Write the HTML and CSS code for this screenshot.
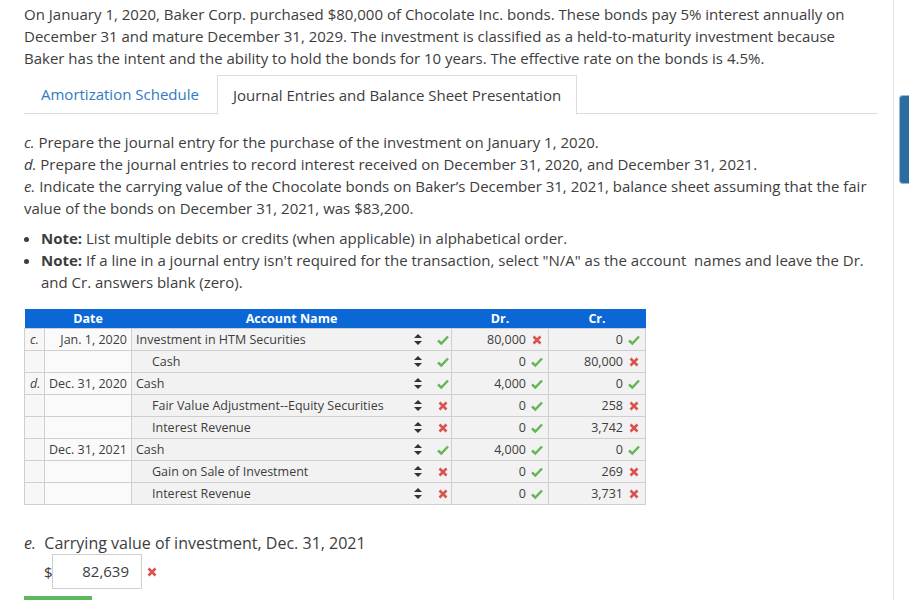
FILE: index.html
```html
<!DOCTYPE html>
<html>
<head>
<meta charset="utf-8">
<link rel="stylesheet" href="styles.css">
</head>
<body>
<div class="page">
  <div class="content">
    <p class="intro">On January 1, 2020, Baker Corp. purchased $80,000 of Chocolate Inc. bonds. These bonds pay 5% interest annually on December 31 and mature December 31, 2029. The investment is classified as a held-to-maturity investment because Baker has the intent and the ability to hold the bonds for 10 years. The effective rate on the bonds is 4.5%.</p>
    <div class="tabs">
      <div class="tab link">Amortization Schedule</div>
      <div class="tab active">Journal Entries and Balance Sheet Presentation</div>
    </div>
    <div class="instructions">
      <p><i>c.</i> Prepare the journal entry for the purchase of the investment on January 1, 2020.<br>
      <i>d.</i> Prepare the journal entries to record interest received on December 31, 2020, and December 31, 2021.<br>
      <i>e.</i> Indicate the carrying value of the Chocolate bonds on Baker’s December 31, 2021, balance sheet assuming that the fair value of the bonds on December 31, 2021, was $83,200.</p>
      <ul class="notes">
        <li><b>Note:</b> List multiple debits or credits (when applicable) in alphabetical order.</li>
        <li><b>Note:</b> If a line in a journal entry isn't required for the transaction, select "N/A" as the account&nbsp; names and leave the Dr. and Cr. answers blank (zero).</li>
      </ul>
    </div>
    <table class="journal">
      <thead>
        <tr><th class="c-let"></th><th class="c-date">Date</th><th class="c-acct">Account Name</th><th class="c-num">Dr.</th><th class="c-num">Cr.</th></tr>
      </thead>
      <tbody>
        <tr><td class="let">c.</td><td class="date">Jan. 1, 2020</td><td class="acct"><div class="acct-in"><span class="name">Investment in HTM Securities</span><span class="sort"></span><span class="ok"></span></div></td><td class="num"><span>80,000</span><span class="bad"></span></td><td class="num"><span>0</span><span class="ok"></span></td></tr>
        <tr><td class="let"></td><td class="date"></td><td class="acct"><div class="acct-in"><span class="name cr">Cash</span><span class="sort"></span><span class="ok"></span></div></td><td class="num"><span>0</span><span class="ok"></span></td><td class="num"><span>80,000</span><span class="bad"></span></td></tr>
        <tr><td class="let">d.</td><td class="date">Dec. 31, 2020</td><td class="acct"><div class="acct-in"><span class="name">Cash</span><span class="sort"></span><span class="ok"></span></div></td><td class="num"><span>4,000</span><span class="ok"></span></td><td class="num"><span>0</span><span class="ok"></span></td></tr>
        <tr><td class="let"></td><td class="date"></td><td class="acct"><div class="acct-in"><span class="name cr">Fair Value Adjustment--Equity Securities</span><span class="sort"></span><span class="bad"></span></div></td><td class="num"><span>0</span><span class="ok"></span></td><td class="num"><span>258</span><span class="bad"></span></td></tr>
        <tr><td class="let"></td><td class="date"></td><td class="acct"><div class="acct-in"><span class="name cr">Interest Revenue</span><span class="sort"></span><span class="bad"></span></div></td><td class="num"><span>0</span><span class="ok"></span></td><td class="num"><span>3,742</span><span class="bad"></span></td></tr>
        <tr><td class="let"></td><td class="date">Dec. 31, 2021</td><td class="acct"><div class="acct-in"><span class="name">Cash</span><span class="sort"></span><span class="ok"></span></div></td><td class="num"><span>4,000</span><span class="ok"></span></td><td class="num"><span>0</span><span class="ok"></span></td></tr>
        <tr><td class="let"></td><td class="date"></td><td class="acct"><div class="acct-in"><span class="name cr">Gain on Sale of Investment</span><span class="sort"></span><span class="bad"></span></div></td><td class="num"><span>0</span><span class="ok"></span></td><td class="num"><span>269</span><span class="bad"></span></td></tr>
        <tr><td class="let"></td><td class="date"></td><td class="acct"><div class="acct-in"><span class="name cr">Interest Revenue</span><span class="sort"></span><span class="bad"></span></div></td><td class="num"><span>0</span><span class="ok"></span></td><td class="num"><span>3,731</span><span class="bad"></span></td></tr>
      </tbody>
    </table>
    <div class="carrying">
      <div class="carry-label"><i>e.</i>&nbsp; Carrying value of investment, Dec. 31, 2021</div>
      <div class="carry-row"><span class="dollar">$</span><span class="box">82,639</span><span class="bad big"></span></div>
      <div class="green-bar"></div>
    </div>
  </div>
  <div class="side"><div class="side-tab"></div></div>
</div>
</body>
</html>
```
FILE: styles.css
```css
html, body { margin: 0; padding: 0; background: #fff; }
body { font-family: "Open Sans", "DejaVu Sans", sans-serif; color: #3d3d3d; font-size: 15px; overflow: hidden; height: 600px; }
.page { display: flex; width: 909px; height: 600px; }
.content { width: 854px; padding: 0 15px 0 24px; border-right: 1px solid #e3e3e3; flex: none; }
.side { flex: 1; padding-top: 95px; display: flex; justify-content: flex-end; }
.side-tab { width: 9px; height: 87px; background: #2b6ca3; border-radius: 4px 0 0 4px; border: 1px solid #9bb7d3; border-right: none; }
p { margin: 0; }
.intro { line-height: 22px; padding-top: 3px; }
.tabs { display: flex; margin-top: 6px; border-bottom: 1px solid #dcdcdc; height: 38px; }
.tab { padding: 0 15px 0 16px; line-height: 38px; height: 38px; }
.tab.link { color: #2f7bbf; padding-left: 17px; padding-right: 18px; }
.tab.active { border: 1px solid #dcdcdc; border-bottom: 1px solid #fff; background: #fff; padding-left: 15px; padding-right: 15px; height: 38px; margin-bottom: -1px; }
.instructions { padding-top: 17px; line-height: 22px; }
.notes { margin: 8px 0 0 0; padding-left: 17px; }
.notes li { margin: 0; }
.journal { border-collapse: collapse; margin-top: 16px; font-size: 12.5px; table-layout: fixed; width: 622px; }
.journal th { background: #0b67d5; color: #fff; font-weight: 700; height: 19px; padding: 0; line-height: 19px; }
.journal th.c-let { width: 20px; }
.journal th.c-date { width: 87px; }
.journal th.c-acct { width: 320px; }
.journal th.c-num { width: 97px; }
.journal td { border: 1px solid #cfcfcf; height: 21px; padding: 0; line-height: 20px; background: #f2f2f2; white-space: nowrap; }
.journal td.let { background: #f7f7f7; font-style: italic; padding-left: 5px; }
.journal td.date { background: #fafafa; text-align: right; padding-right: 4px; }
.acct-in { display: flex; align-items: center; padding-left: 4px; }
.name { flex: 1; min-width: 0; overflow: hidden; }
.name.cr { padding-left: 16px; }
.sort { width: 8px; height: 11px; margin-right: 15px; position: relative; flex: none; }
.sort::before, .sort::after { content: ""; position: absolute; left: 0; border-left: 4px solid transparent; border-right: 4px solid transparent; }
.sort::before { top: 0; border-bottom: 4px solid #333; }
.sort::after { bottom: 0; border-top: 4px solid #333; }
.journal td.num { text-align: right; padding-right: 4px; }
.num span { vertical-align: middle; }
.ok, .bad { display: inline-block; width: 12px; height: 12px; margin-left: 5px; margin-right: 1px; vertical-align: middle; background-repeat: no-repeat; background-position: center; flex: none; }
.ok { background-image: url("data:image/svg+xml;utf8,<svg xmlns='http://www.w3.org/2000/svg' width='12' height='12' viewBox='0 0 12 12'><path d='M1 6.5 L4.3 9.5 L11 2.5' fill='none' stroke='%2364b554' stroke-width='2.4'/></svg>"); }
.bad { background-image: url("data:image/svg+xml;utf8,<svg xmlns='http://www.w3.org/2000/svg' width='12' height='12' viewBox='0 0 12 12'><path d='M2.5 2.5 L9.5 9.5 M9.5 2.5 L2.5 9.5' fill='none' stroke='%23d9534f' stroke-width='2.6'/></svg>"); }
.acct .ok, .acct .bad { margin-left: 0; margin-right: 2px; }
.carrying { padding-top: 27px; }
.carry-label { font-size: 16px; line-height: 22px; }
.carry-row { display: flex; align-items: center; margin-top: 0; padding-left: 20px; font-size: 15px; }
.dollar { width: 8px; }
.box { width: 76px; height: 33px; border: 1px solid #cfcfcf; text-align: right; line-height: 33px; padding-right: 12px; }
.big { width: 14px; height: 14px; margin-left: 3px; }
.green-bar { width: 68px; height: 8px; background: #5cb85c; margin-top: 7px; }
```
